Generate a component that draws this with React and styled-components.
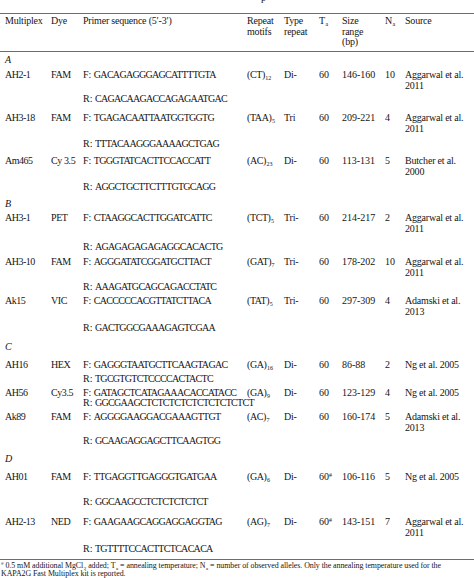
import React from 'react';
import styled, { createGlobalStyle } from 'styled-components';

const Global = createGlobalStyle`
  html, body { margin: 0; padding: 0; background: #fff; }
  body {
    font-family: "Liberation Serif", "Times New Roman", serif;
    color: #151515;
  }
`;

const COLS = '46px 32px 164px 37px 35px 23px 43px 20px 69px';
const RULE = '1.5px solid #6d6d6d';

const Page = styled.div`
  width: 474px;
  height: 578px;
  overflow: hidden;
  font-size: 10px;
`;

const Caption = styled.div`
  height: 13px;
  overflow: hidden;
  padding-left: 261px;
  font-size: 10px;
  line-height: 11px;
`;

const CaptionText = styled.div`
  margin-top: -8px;
`;

const Table = styled.div`
  border-top: ${RULE};
  border-bottom: ${RULE};
`;

const Head = styled.div`
  display: grid;
  grid-template-columns: ${COLS};
  padding: 2.25px 0 0 5px;
  height: 34.25px;
  border-bottom: ${RULE};
  line-height: 10.5px;
`;

const Body = styled.div`
  padding-top: 2px;
`;

const Row = styled.div`
  display: grid;
  grid-template-columns: ${COLS};
  padding-left: 5px;
  height: ${(p) => p.$h}px;
  line-height: 11px;
`;

const Cell = styled.div`
  white-space: nowrap;
  letter-spacing: ${(p) => p.$ls || '-0.2px'};
`;

const Strand = styled.span`
  letter-spacing: 0;
  margin-right: 2.5px;
`;

const GroupLabel = styled.div`
  font-style: italic;
`;

const Sub = styled.sub`
  font-size: ${(p) => p.$fs || 6}px;
  line-height: 0;
  vertical-align: -2px;
  letter-spacing: 0;
  margin-left: 0.5px;
`;

const Sup = styled.sup`
  font-size: ${(p) => p.$fs || 6}px;
  line-height: 0;
  vertical-align: 3px;
  letter-spacing: 0;
`;

const Footnote = styled.div`
  padding: 1.5px 0 0 1px;
  font-size: 7.9px;
  line-height: 8px;
  white-space: nowrap;
  letter-spacing: -0.05px;
`;

const groups = [
  {
    label: 'A',
    h: 15,
    items: [
      { id: 'AH2-1', dye: 'FAM', f: 'GACAGAGGGAGCATTTTGTA', r: 'CAGACAAGACCAGAGAATGAC', m: '(CT)', ms: '12', type: 'Di-', ta: '60', size: '146-160', n: '10', src: ['Aggarwal et al.', '2011'], fh: 24, rh: 19 },
      { id: 'AH3-18', dye: 'FAM', f: 'TGAGACAATTAATGGTGGTG', r: 'TTTACAAGGGAAAAGCTGAG', m: '(TAA)', ms: '5', type: 'Tri', ta: '60', size: '209-221', n: '4', src: ['Aggarwal et al.', '2011'], fh: 26, rh: 17 },
      { id: 'Am465', dye: 'Cy 3.5', f: 'TGGGTATCACTTCCACCATT', r: 'AGGCTGCTTCTTTGTGCAGG', m: '(AC)', ms: '23', type: 'Di-', ta: '60', size: '113-131', n: '5', src: ['Butcher et al.', '2000'], fh: 26, rh: 17 },
    ],
  },
  {
    label: 'B',
    h: 14,
    items: [
      { id: 'AH3-1', dye: 'PET', f: 'CTAAGGCACTTGGATCATTC', r: 'AGAGAGAGAGAGGCACACTG', m: '(TCT)', ms: '5', type: 'Tri-', ta: '60', size: '214-217', n: '2', src: ['Aggarwal et al.', '2011'], fh: 29, rh: 15 },
      { id: 'AH3-10', dye: 'FAM', f: 'AGGGATATCGGATGCTTACT', r: 'AAAGATGCAGCAGACCTATC', m: '(GAT)', ms: '7', type: 'Tri-', ta: '60', size: '178-202', n: '10', src: ['Aggarwal et al.', '2011'], fh: 25, rh: 14 },
      { id: 'Ak15', dye: 'VIC', f: 'CACCCCCACGTTATCTTACA', r: 'GACTGGCGAAAGAGTCGAA', m: '(TAT)', ms: '5', type: 'Tri-', ta: '60', size: '297-309', n: '4', src: ['Adamski et al.', '2013'], fh: 27, rh: 19 },
    ],
  },
  {
    label: 'C',
    h: 18,
    items: [
      { id: 'AH16', dye: 'HEX', f: 'GAGGGTAATGCTTCAAGTAGAC', r: 'TGCGTGTCTCCCCACTACTC', m: '(GA)', ms: '16', type: 'Di-', ta: '60', size: '86-88', n: '2', src: ['Ng et al. 2005'], fh: 14, rh: 14 },
      { id: 'AH56', dye: 'Cy3.5', f: 'GATAGCTCATAGAAACACCATACC', r: 'GGCGAAGCTCTCTCTCTCTCTCTCTCT', m: '(GA)', ms: '9', type: 'Di-', ta: '60', size: '123-129', n: '4', src: ['Ng et al. 2005'], fh: 10, rh: 14 },
      { id: 'Ak89', dye: 'FAM', f: 'AGGGGAAGGACGAAAGTTGT', r: 'GCAAGAGGAGCTTCAAGTGG', m: '(AC)', ms: '7', type: 'Di-', ta: '60', size: '160-174', n: '5', src: ['Adamski et al.', '2013'], fh: 24, rh: 18 },
    ],
  },
  {
    label: 'D',
    h: 18,
    items: [
      { id: 'AH01', dye: 'FAM', f: 'TTGAGGTTGAGGGTGATGAA', r: 'GGCAAGCCTCTCTCTCTCT', m: '(GA)', ms: '6', type: 'Di-', ta: '60', taSup: true, size: '106-116', n: '5', src: ['Ng et al. 2005'], fh: 25, rh: 20 },
      { id: 'AH2-13', dye: 'NED', f: 'GAAGAAGCAGGAGGAGGTAG', r: 'TGTTTTCCACTTCTCACACA', m: '(AG)', ms: '7', type: 'Di-', ta: '60', taSup: true, size: '143-151', n: '7', src: ['Aggarwal et al.', '2011'], fh: 27, rh: 16.5 },
    ],
  },
];

const SEQ_LS = '-0.7px';
const CAP_LS = '-0.5px';

function PrimerRows({ it }) {
  return (
    <>
      <Row $h={it.fh}>
        <Cell $ls={CAP_LS}>{it.id}</Cell>
        <Cell $ls="-0.4px">{it.dye}</Cell>
        <Cell $ls={SEQ_LS}>
          <Strand>F:</Strand>
          {it.f}
        </Cell>
        <Cell $ls="-0.4px">
          {it.m}
          <Sub>{it.ms}</Sub>
        </Cell>
        <Cell>{it.type}</Cell>
        <Cell $ls="0">
          {it.ta}
          {it.taSup && <Sup>#</Sup>}
        </Cell>
        <Cell $ls="0">{it.size}</Cell>
        <Cell $ls="0">{it.n}</Cell>
        <Cell>
          {it.src.map((s, i) => (
            <div key={i}>{s}</div>
          ))}
        </Cell>
      </Row>
      <Row $h={it.rh}>
        <Cell />
        <Cell />
        <Cell $ls={SEQ_LS}>
          <Strand>R:</Strand>
          {it.r}
        </Cell>
      </Row>
    </>
  );
}

export default function App() {
  return (
    <Page>
      <Global />
      <Caption>
        <CaptionText>p</CaptionText>
      </Caption>
      <Table>
        <Head>
          <Cell>Multiplex</Cell>
          <Cell>Dye</Cell>
          <Cell>Primer sequence (5′-3′)</Cell>
          <Cell>
            Repeat
            <br />
            motifs
          </Cell>
          <Cell>
            Type
            <br />
            repeat
          </Cell>
          <Cell>
            T<Sub>a</Sub>
          </Cell>
          <Cell>
            Size
            <br />
            range
            <br />
            (bp)
          </Cell>
          <Cell>
            N<Sub>a</Sub>
          </Cell>
          <Cell>Source</Cell>
        </Head>
        <Body>
          {groups.map((g) => (
            <React.Fragment key={g.label}>
              <Row $h={g.h}>
                <GroupLabel>{g.label}</GroupLabel>
              </Row>
              {g.items.map((it) => (
                <PrimerRows key={it.id} it={it} />
              ))}
            </React.Fragment>
          ))}
        </Body>
      </Table>
      <Footnote>
        <Sup $fs={5}>#</Sup> 0.5 mM additional MgCl<Sub $fs={5}>2</Sub> added; T<Sub $fs={5}>a</Sub> = annealing
        temperature; N<Sub $fs={5}>a</Sub> = number of observed alleles. Only the annealing temperature used for the
        <br />
        KAPA2G Fast Multiplex kit is reported.
      </Footnote>
    </Page>
  );
}
